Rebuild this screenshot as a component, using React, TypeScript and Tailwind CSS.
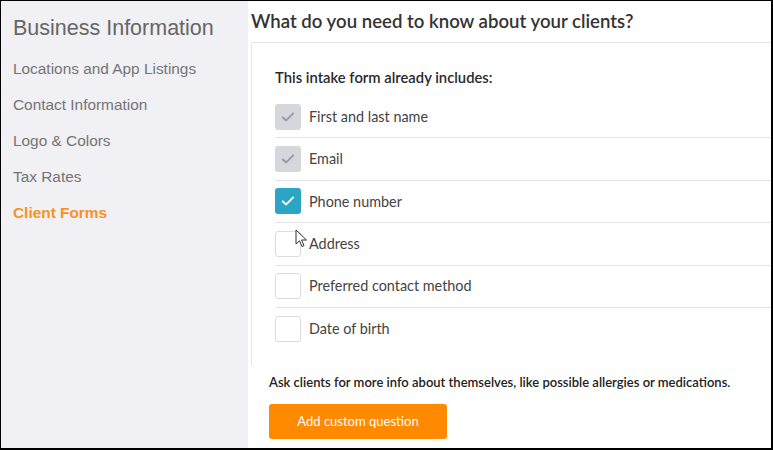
import React from "react";

const sideItems = [
  "Locations and App Listings",
  "Contact Information",
  "Logo & Colors",
  "Tax Rates",
];

type FieldState = "locked" | "checked" | "empty";

const fields: { label: string; state: FieldState }[] = [
  { label: "First and last name", state: "locked" },
  { label: "Email", state: "locked" },
  { label: "Phone number", state: "checked" },
  { label: "Address", state: "empty" },
  { label: "Preferred contact method", state: "empty" },
  { label: "Date of birth", state: "empty" },
];

function Box({ state }: { state: FieldState }) {
  if (state === "empty") {
    return <div className="h-[26px] w-[26px] shrink-0 rounded-[3px] border border-[#dcdcdc] bg-white" />;
  }
  const locked = state === "locked";
  return (
    <div
      className={`flex h-[26px] w-[26px] shrink-0 items-center justify-center rounded-[3px] ${
        locked ? "bg-[#d6d6dd]" : "bg-[#2ba4c6]"
      }`}
    >
      <svg width="16" height="16" viewBox="0 0 16 16" fill="none">
        <path
          d="M2.8 8.4 L6.2 11.4 L13.2 4.4"
          stroke={locked ? "#9a9aa3" : "#ffffff"}
          strokeWidth="2"
          strokeLinecap="round"
          strokeLinejoin="round"
        />
      </svg>
    </div>
  );
}

export default function App() {
  return (
    <div className="relative flex h-[450px] w-[773px] overflow-hidden border-t border-l border-r-2 border-b-2 border-black bg-white">
      {/* sidebar */}
      <aside className="w-[247px] shrink-0 bg-[#f1f0f4] pl-[12px] pt-[13px] font-['Liberation_Sans',Arial,sans-serif]">
        <h2 className="text-[21.5px] leading-[28px] text-[#666666]">Business Information</h2>
        <ul className="mt-[9px]">
          {sideItems.map((item) => (
            <li key={item} className="text-[15.4px] leading-[36px] text-[#757575]">
              {item}
            </li>
          ))}
          <li className="text-[15.4px] font-bold leading-[36px] text-[#f7931e]">Client Forms</li>
        </ul>
      </aside>

      {/* main */}
      <main className="flex-1 pl-[3px] font-['Lato','Noto_Sans',sans-serif]">
        <h1 className="h-[41px] pt-[8px] text-[18.6px] font-semibold leading-[24px] text-[#333333]">
          What do you need to know about your clients?
        </h1>
        <section className="h-[324px] border-t border-l border-[#e6e6e6] pl-[23px] pt-[25px]">
          <p className="mb-[10px] text-[14.8px] font-semibold leading-[18px] text-[#2a2a2a]">
            This intake form already includes:
          </p>
          <div>
            {fields.map((f, i) => (
              <div
                key={f.label}
                className={`flex h-[42.4px] items-center gap-[8px] ${
                  i < fields.length - 1 ? "border-b border-[#e4e4e4]" : ""
                }`}
              >
                <Box state={f.state} />
                <span className="text-[14.4px] text-[#444444]">{f.label}</span>
              </div>
            ))}
          </div>
        </section>
        <div className="pl-[18px] pt-[7px]">
          <p className="text-[13px] font-semibold leading-[18px] text-[#222222]">
            Ask clients for more info about themselves, like possible allergies or medications.
          </p>
          <button className="mt-[13px] flex h-[35px] w-[178px] items-center justify-center rounded-[3px] bg-[#ff8a00] text-[13px] text-white">
            Add custom question
          </button>
        </div>
      </main>

      {/* mouse cursor */}
      <svg className="absolute left-[294px] top-[228px]" width="14" height="20" viewBox="0 0 14 20">
        <path d="M1 1 L1 15 L4.5 11.8 L7 17.5 L9 16.6 L6.6 11 L11.5 11 Z" fill="#ffffff" stroke="#333333" strokeWidth="1" strokeLinejoin="round" />
      </svg>
    </div>
  );
}
